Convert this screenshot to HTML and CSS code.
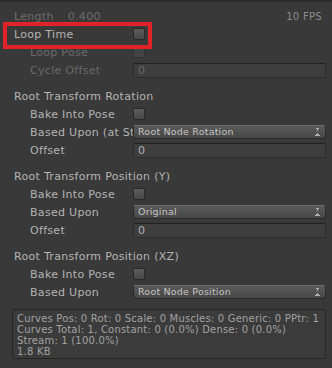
FILE: index.html
```html
<!DOCTYPE html>
<html>
<head>
    <title>Animation Clip</title>
    <link rel="stylesheet" href="styles.css">
</head>
<body>
    <div class="panel">
        <div class="row top-row">
            <span class="length-label">Length</span>
            <span class="length-value">0.400</span>
            <span class="fps">10 FPS</span>
        </div>

        <div class="row highlight">
            <span class="label">Loop Time</span>
            <span class="checkbox"></span>
        </div>
        <div class="row sub disabled">
            <span class="label">Loop Pose</span>
            <span class="checkbox"></span>
        </div>
        <div class="row sub disabled">
            <span class="label">Cycle Offset</span>
            <span class="field">0</span>
        </div>

        <div class="section">
            <div class="row"><span class="label">Root Transform Rotation</span></div>
            <div class="row sub">
                <span class="label">Bake Into Pose</span>
                <span class="checkbox"></span>
            </div>
            <div class="row sub">
                <span class="label">Based Upon (at Start)</span>
                <span class="dropdown">Root Node Rotation<span class="arrows"></span></span>
            </div>
            <div class="row sub">
                <span class="label">Offset</span>
                <span class="field">0</span>
            </div>
        </div>

        <div class="section">
            <div class="row"><span class="label">Root Transform Position (Y)</span></div>
            <div class="row sub">
                <span class="label">Bake Into Pose</span>
                <span class="checkbox"></span>
            </div>
            <div class="row sub">
                <span class="label">Based Upon</span>
                <span class="dropdown">Original<span class="arrows"></span></span>
            </div>
            <div class="row sub">
                <span class="label">Offset</span>
                <span class="field">0</span>
            </div>
        </div>

        <div class="section">
            <div class="row"><span class="label">Root Transform Position (XZ)</span></div>
            <div class="row sub">
                <span class="label">Bake Into Pose</span>
                <span class="checkbox"></span>
            </div>
            <div class="row sub">
                <span class="label">Based Upon</span>
                <span class="dropdown">Root Node Position<span class="arrows"></span></span>
            </div>
        </div>

        <div class="info">
            <div>Curves Pos: 0 Rot: 0 Scale: 0 Muscles: 0 Generic: 0 PPtr: 1</div>
            <div>Curves Total: 1, Constant: 0 (0.0%) Dense: 0 (0.0%)</div>
            <div>Stream: 1 (100.0%)</div>
            <div>1.8 KB</div>
        </div>
    </div>
</body>
</html>
```

FILE: styles.css
```css
body {
    margin: 0;
    background-color: #393939;
    font-family: "DejaVu Sans", sans-serif;
    font-size: 11px;
    letter-spacing: 0.3px;
    color: #b4b4b4;
}

.panel {
    border-top: 2px solid #2c2c2c;
    padding: 5px 6px 0 14px;
}

.row {
    display: flex;
    align-items: center;
    height: 18px;
    white-space: nowrap;
}

.top-row {
    color: #6c6c6c;
}

.length-value {
    margin-left: 14px;
}

.fps {
    margin-left: auto;
    margin-right: 4px;
    color: #8c8c8c;
    font-size: 10px;
}

.label {
    flex: none;
}

.sub .label {
    width: 103px;
    padding-left: 16px;
    overflow: hidden;
}

.disabled {
    color: #6a6a6a;
}

.highlight {
    position: relative;
}

.highlight .label {
    width: 119px;
}

.highlight::after {
    content: "";
    position: absolute;
    left: -11px;
    top: -3px;
    width: 141px;
    height: 19px;
    border: 4px solid #e3232a;
}

.checkbox {
    display: block;
    width: 10px;
    height: 10px;
    border: 1px solid #2a2a2a;
    border-radius: 2px;
    background: linear-gradient(#5e5e5e, #474747);
}

.disabled .checkbox {
    background: #444444;
    border-color: #333333;
}

.field {
    flex: 1;
    height: 13px;
    line-height: 13px;
    padding-left: 4px;
    background-color: #3e3e3e;
    border: 1px solid #2c2c2c;
    border-top-color: #222222;
}

.disabled .field {
    color: #6a6a6a;
}

.dropdown {
    flex: 1;
    position: relative;
    height: 12px;
    line-height: 12px;
    padding-left: 4px;
    font-size: 9.5px;
    letter-spacing: 0.2px;
    color: #c4c4c4;
    background: linear-gradient(#5a5a5a, #464646);
    border: 1px solid #2a2a2a;
    border-top-color: #6a6a6a;
    border-radius: 3px;
}

.arrows {
    position: absolute;
    right: 5px;
    top: 2px;
    width: 5px;
    height: 8px;
    background:
        linear-gradient(to top right, transparent 50%, #b0b0b0 50%) 0 0 / 3px 3px no-repeat,
        linear-gradient(to top left, transparent 50%, #b0b0b0 50%) 2px 0 / 3px 3px no-repeat,
        linear-gradient(to bottom right, transparent 50%, #b0b0b0 50%) 0 5px / 3px 3px no-repeat,
        linear-gradient(to bottom left, transparent 50%, #b0b0b0 50%) 2px 5px / 3px 3px no-repeat;
}

.section {
    margin-top: 8px;
}

.info {
    margin: 8px 0 0 -2px;
    padding: 3px 4px 2px 4px;
    height: 43px;
    border: 1px solid #262626;
    border-radius: 2px;
    background-color: #3b3b3b;
    font-size: 10px;
    letter-spacing: 0.2px;
    line-height: 11px;
    color: #a2a2a2;
    white-space: nowrap;
    overflow: hidden;
}
```
